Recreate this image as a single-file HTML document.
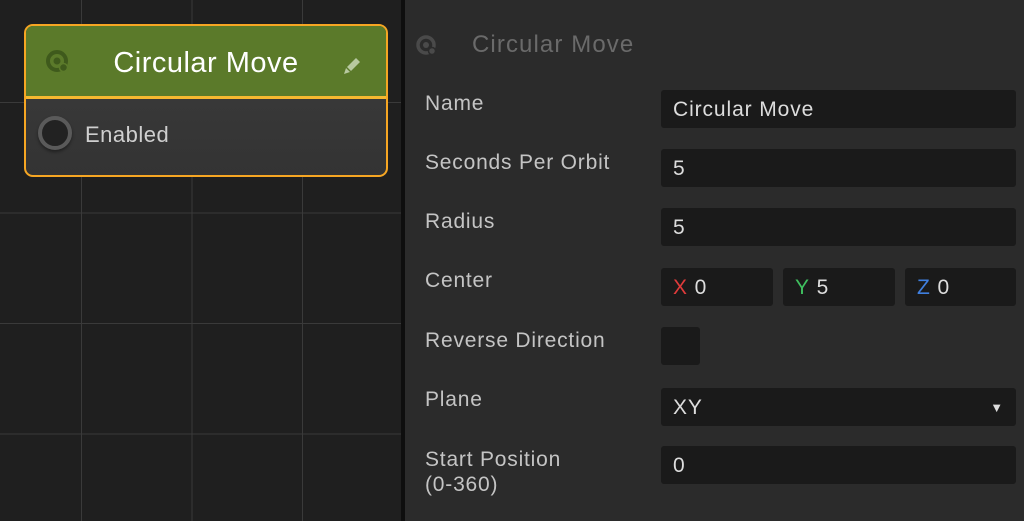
<!DOCTYPE html>
<html><head><style>
body{margin:0;width:1024px;height:521px;overflow:hidden;background:#1f1f1f;font-family:"Liberation Sans",sans-serif;position:relative}
.grid{position:absolute;left:0;top:0;width:402px;height:521px;
background-image:linear-gradient(to right,transparent 81px,#3a3a3a 81px,#3a3a3a 82px,transparent 82px),linear-gradient(to bottom,transparent 102px,#3a3a3a 102px,#3a3a3a 103px,transparent 103px);
background-size:110.5px 110.5px;background-position:0 0}
.div{position:absolute;left:401px;top:0;width:4px;height:521px;background:#0e0e0e}
.panel{position:absolute;left:405px;top:0;right:0;bottom:0;background:#2b2b2b}
.node{position:absolute;left:24px;top:24px;width:360px;height:149px;border:2.5px solid #f6a623;border-radius:9px;overflow:hidden;background:linear-gradient(#3d3d3d,#333)}
.hdr{height:70px;background:#5b7a2a;border-bottom:3px solid #f6b830;color:#fff;font-size:29px;letter-spacing:0.5px;text-align:center;line-height:74px}
.lbl{position:absolute;left:425px;color:#c4c4c4;font-size:21px;letter-spacing:0.8px}
.in{position:absolute;left:661px;width:355px;height:38px;background:#1a1a1a;border-radius:3px;color:#ddd;font-size:21px;letter-spacing:0.9px;line-height:40px;box-sizing:border-box;padding-left:12px}
</style></head><body>
<div class="grid"></div>
<div class="div"></div>
<div class="panel"></div>
<div class="node">
 <div class="hdr">Circular Move</div>
 <svg style="position:absolute;left:18px;top:22px" width="30" height="30"><circle cx="13" cy="13" r="9" fill="none" stroke="#3f5a1c" stroke-width="4"/><circle cx="13" cy="13" r="3.5" fill="#3f5a1c"/><circle cx="19.5" cy="19.5" r="4" fill="#3f5a1c" stroke="#5b7a2a" stroke-width="1.5"/></svg>
 <svg style="position:absolute;left:314px;top:26px" width="24" height="24"><path d="M4 22 L6 16 L10 20 Z M7 15 L16 6 L20 10 L11 19 Z" fill="#b8c9a0"/></svg>
 <div style="position:absolute;left:12px;top:90px;width:34px;height:34px;border-radius:50%;border:4px solid #5a5a5a;background:#222;box-sizing:border-box;box-shadow:0 2px 3px rgba(0,0,0,.4)"></div>
 <div style="position:absolute;left:59px;top:96px;color:#cfcfcf;font-size:22px;letter-spacing:0.5px">Enabled</div>
</div>
<svg style="position:absolute;left:414px;top:33px" width="26" height="26"><circle cx="12" cy="12" r="8" fill="none" stroke="#4a4a4a" stroke-width="3.5"/><circle cx="12" cy="12" r="3" fill="#4a4a4a"/><circle cx="18" cy="18" r="3.5" fill="#4a4a4a" stroke="#2b2b2b" stroke-width="1.5"/></svg>
<div style="position:absolute;left:472px;top:31px;color:#6a6a6a;font-size:24px;letter-spacing:1.1px">Circular Move</div>
<div class="lbl" style="top:92px">Name</div><div class="in" style="top:90px">Circular Move</div>
<div class="lbl" style="top:151px">Seconds Per Orbit</div><div class="in" style="top:149px">5</div>
<div class="lbl" style="top:210px">Radius</div><div class="in" style="top:208px">5</div>
<div class="lbl" style="top:269px">Center</div>
<div class="in" style="top:268px;width:112px"><span style="color:#e03b3b">X</span>&nbsp;0</div>
<div class="in" style="top:268px;left:783px;width:112px"><span style="color:#3fbf5f">Y</span>&nbsp;5</div>
<div class="in" style="top:268px;left:905px;width:111px"><span style="color:#3f7fdf">Z</span>&nbsp;0</div>
<div class="lbl" style="top:329px">Reverse Direction</div><div class="in" style="top:327px;width:39px"></div>
<div class="lbl" style="top:388px">Plane</div><div class="in" style="top:388px">XY<span style="position:absolute;right:12px;top:0;font-size:13px">▼</span></div>
<div class="lbl" style="top:447px;line-height:25px">Start Position<br>(0-360)</div><div class="in" style="top:446px">0</div>
</body></html>
